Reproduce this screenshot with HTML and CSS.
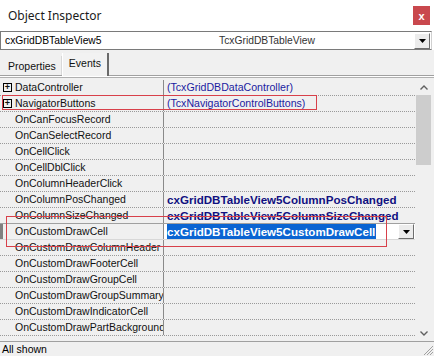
FILE: index.html
```html
<!DOCTYPE html>
<html lang="en">
<head>
    <meta charset="UTF-8">
    <title>Object Inspector</title>
    <link rel="stylesheet" href="styles.css">
</head>
<body>
<div class="window">
    <div class="titlebar">
        <span class="title">Object Inspector</span>
        <span class="close">x</span>
    </div>

    <div class="combo">
        <span class="combo-name">cxGridDBTableView5</span>
        <span class="combo-type">TcxGridDBTableView</span>
        <span class="drop"><svg width="7" height="4" viewBox="0 0 7 4"><path d="M0 0h7L3.5 4z" fill="#000"/></svg></span>
    </div>

    <div class="tabs">
        <span class="tab">Properties</span>
        <span class="tab active">Events</span>
    </div>

    <div class="grid">
        <div class="rows">
            <div class="row"><div class="name"><span class="plus">+</span>DataController</div><div class="value obj">(TcxGridDBDataController)</div></div>
            <div class="row"><div class="name"><span class="plus">+</span>NavigatorButtons</div><div class="value obj">(TcxNavigatorControlButtons)</div></div>
            <div class="row"><div class="name">OnCanFocusRecord</div><div class="value"></div></div>
            <div class="row"><div class="name">OnCanSelectRecord</div><div class="value"></div></div>
            <div class="row"><div class="name">OnCellClick</div><div class="value"></div></div>
            <div class="row"><div class="name">OnCellDblClick</div><div class="value"></div></div>
            <div class="row"><div class="name">OnColumnHeaderClick</div><div class="value"></div></div>
            <div class="row"><div class="name">OnColumnPosChanged</div><div class="value handler">cxGridDBTableView5ColumnPosChanged</div></div>
            <div class="row"><div class="name">OnColumnSizeChanged</div><div class="value handler">cxGridDBTableView5ColumnSizeChanged</div></div>
            <div class="row selected"><div class="name">OnCustomDrawCell</div><div class="value handler"><span class="sel">cxGridDBTableView5CustomDrawCell</span><span class="drop small"><svg width="7" height="4" viewBox="0 0 7 4"><path d="M0 0h7L3.5 4z" fill="#000"/></svg></span></div></div>
            <div class="row"><div class="name">OnCustomDrawColumnHeader</div><div class="value"></div></div>
            <div class="row"><div class="name">OnCustomDrawFooterCell</div><div class="value"></div></div>
            <div class="row"><div class="name">OnCustomDrawGroupCell</div><div class="value"></div></div>
            <div class="row"><div class="name">OnCustomDrawGroupSummaryCell</div><div class="value"></div></div>
            <div class="row"><div class="name">OnCustomDrawIndicatorCell</div><div class="value"></div></div>
            <div class="row"><div class="name">OnCustomDrawPartBackground</div><div class="value"></div></div>
        </div>
        <div class="scrollbar">
            <svg class="arrow" width="8" height="5" viewBox="0 0 8 5"><path d="M0.5 4.5L4 1L7.5 4.5" fill="none" stroke="#606060" stroke-width="1.4"/></svg>
            <div class="thumb"></div>
            <div class="track"></div>
            <svg class="arrow" width="8" height="5" viewBox="0 0 8 5"><path d="M0.5 0.5L4 4L7.5 0.5" fill="none" stroke="#606060" stroke-width="1.4"/></svg>
        </div>
        <div class="mark mark-nav"></div>
        <div class="mark mark-draw"></div>
    </div>

    <div class="status">
        <span>All shown</span>
        <svg class="grip" width="10" height="10" viewBox="0 0 10 10"><path d="M10 1L1 10M10 4L4 10M10 7L7 10" stroke="#a0a0a0" stroke-width="1"/></svg>
    </div>
</div>
</body>
</html>
```

FILE: styles.css
```css
body {
    margin: 0;
    background-color: #ffffff;
    font-family: "Liberation Sans", Arial, sans-serif;
    font-size: 10.5px;
    color: #000;
}

.window {
    width: 434px;
    height: 356px;
    display: flex;
    flex-direction: column;
    overflow: hidden;
}

/* Title */
.titlebar {
    height: 31px;
    display: flex;
    align-items: center;
    justify-content: space-between;
    padding: 0 4px 0 8px;
    background: #ffffff;
}
.title {
    font-family: "Noto Sans", sans-serif;
    font-size: 12px;
    color: #1a1a1a;
}
.close {
    width: 17px;
    height: 19px;
    background: #c9484d;
    color: #fff;
    font-size: 11px;
    font-weight: bold;
    display: flex;
    align-items: center;
    justify-content: center;
}

/* Combo */
.combo {
    height: 17px;
    border: 1px solid #7a7a7a;
    border-right-color: #d0d0d0;
    margin-right: 2px;
    display: flex;
    align-items: center;
    background: #fff;
}
.combo-name {
    width: 214px;
    padding-left: 4px;
    font-size: 10.3px;
}
.combo-type {
    flex: 1;
    font-size: 10.3px;
    color: #333;
}
.drop {
    width: 14px;
    height: 14px;
    margin-right: 1px;
    border: 1px solid #fff;
    border-right-color: #6e6e6e;
    border-bottom-color: #6e6e6e;
    background: #ececec;
    display: flex;
    align-items: center;
    justify-content: center;
}

/* Tabs */
.tabs {
    height: 25px;
    background: #f0f0f0;
    display: flex;
    align-items: flex-end;
    border-bottom: 1px solid #a0a0a0;
    padding-left: 1px;
}
.tab {
    height: 19px;
    padding: 0 5px 0 7px;
    display: flex;
    align-items: center;
    font-size: 10.5px;
    border-right: 1px solid #d8d8d8;
    color: #111;
}
.tab.active {
    height: 23px;
    align-items: flex-start;
    padding: 4px 6px 0 6px;
    box-sizing: border-box;
    background: #f2f2f2;
    border-left: 1px solid #fff;
    border-right: 2px solid #6a6a6a;
    margin-bottom: -1px;
}

/* Grid */
.grid {
    position: relative;
    height: 263px;
    margin-top: 1px;
    display: flex;
    background: #f0f0f0;
    border-top: 1px solid #b0b0b0;
}
.rows {
    width: 415px;
    padding-top: 2px;
}
.row {
    height: 16px;
    display: flex;
    box-sizing: border-box;
    border-bottom: 1px dotted #9a9a9a;
}
.name {
    width: 148px;
    padding-left: 15px;
    position: relative;
    white-space: nowrap;
    overflow: hidden;
    line-height: 15px;
    font-size: 10.5px;
    color: #111;
    border-right: 1px solid #8a8a8a;
}
.value {
    flex: 1;
    padding-left: 3px;
    line-height: 15px;
    white-space: nowrap;
    overflow: hidden;
    display: flex;
}
.value.obj {
    color: #1b1ba0;
    font-size: 10.6px;
}
.value.handler {
    color: #101080;
    font-weight: bold;
    font-size: 11.6px;
}
.plus {
    position: absolute;
    left: 3px;
    top: 3px;
    width: 7px;
    height: 7px;
    border: 1px solid #000;
    font-size: 9px;
    line-height: 7px;
    text-align: center;
    font-weight: bold;
}
.row.selected {
    border-top: 1px solid #a0a0a0;
    border-bottom: 1px solid #d8d8d8;
    margin-top: -1px;
    height: 17px;
}
.row.selected .name {
    box-shadow: inset 3px 0 0 #808080;
}
.row.selected .value {
    background: #fff;
    padding-left: 3px;
    justify-content: space-between;
}
.sel {
    background: #0a64d2;
    color: #fff;
    padding-right: 1px;
}
.drop.small {
    height: 13px;
}

/* Scrollbar */
.scrollbar {
    width: 17px;
    display: flex;
    flex-direction: column;
    align-items: center;
    background: #f0f0f0;
    padding-top: 5px;
}
.arrow {
    margin: 2px 0 5px;
}
.thumb {
    width: 15px;
    height: 70px;
    background: #cdcdcd;
}
.track {
    flex: 1;
}

/* Annotation boxes */
.mark {
    position: absolute;
    border: 1px solid #d8404a;
}
.mark-nav {
    left: 2px;
    top: 17px;
    width: 313px;
    height: 13px;
}
.mark-draw {
    left: 6px;
    top: 138px;
    width: 379px;
    height: 29px;
}

/* Status */
.status {
    flex: 1;
    display: flex;
    justify-content: space-between;
    align-items: center;
    padding-left: 2px;
    background: #f0f0f0;
    border-top: 1px solid #a0a0a0;
    font-size: 10.5px;
}
.grip {
    align-self: flex-end;
    margin: 0 1px 1px 0;
}
```
